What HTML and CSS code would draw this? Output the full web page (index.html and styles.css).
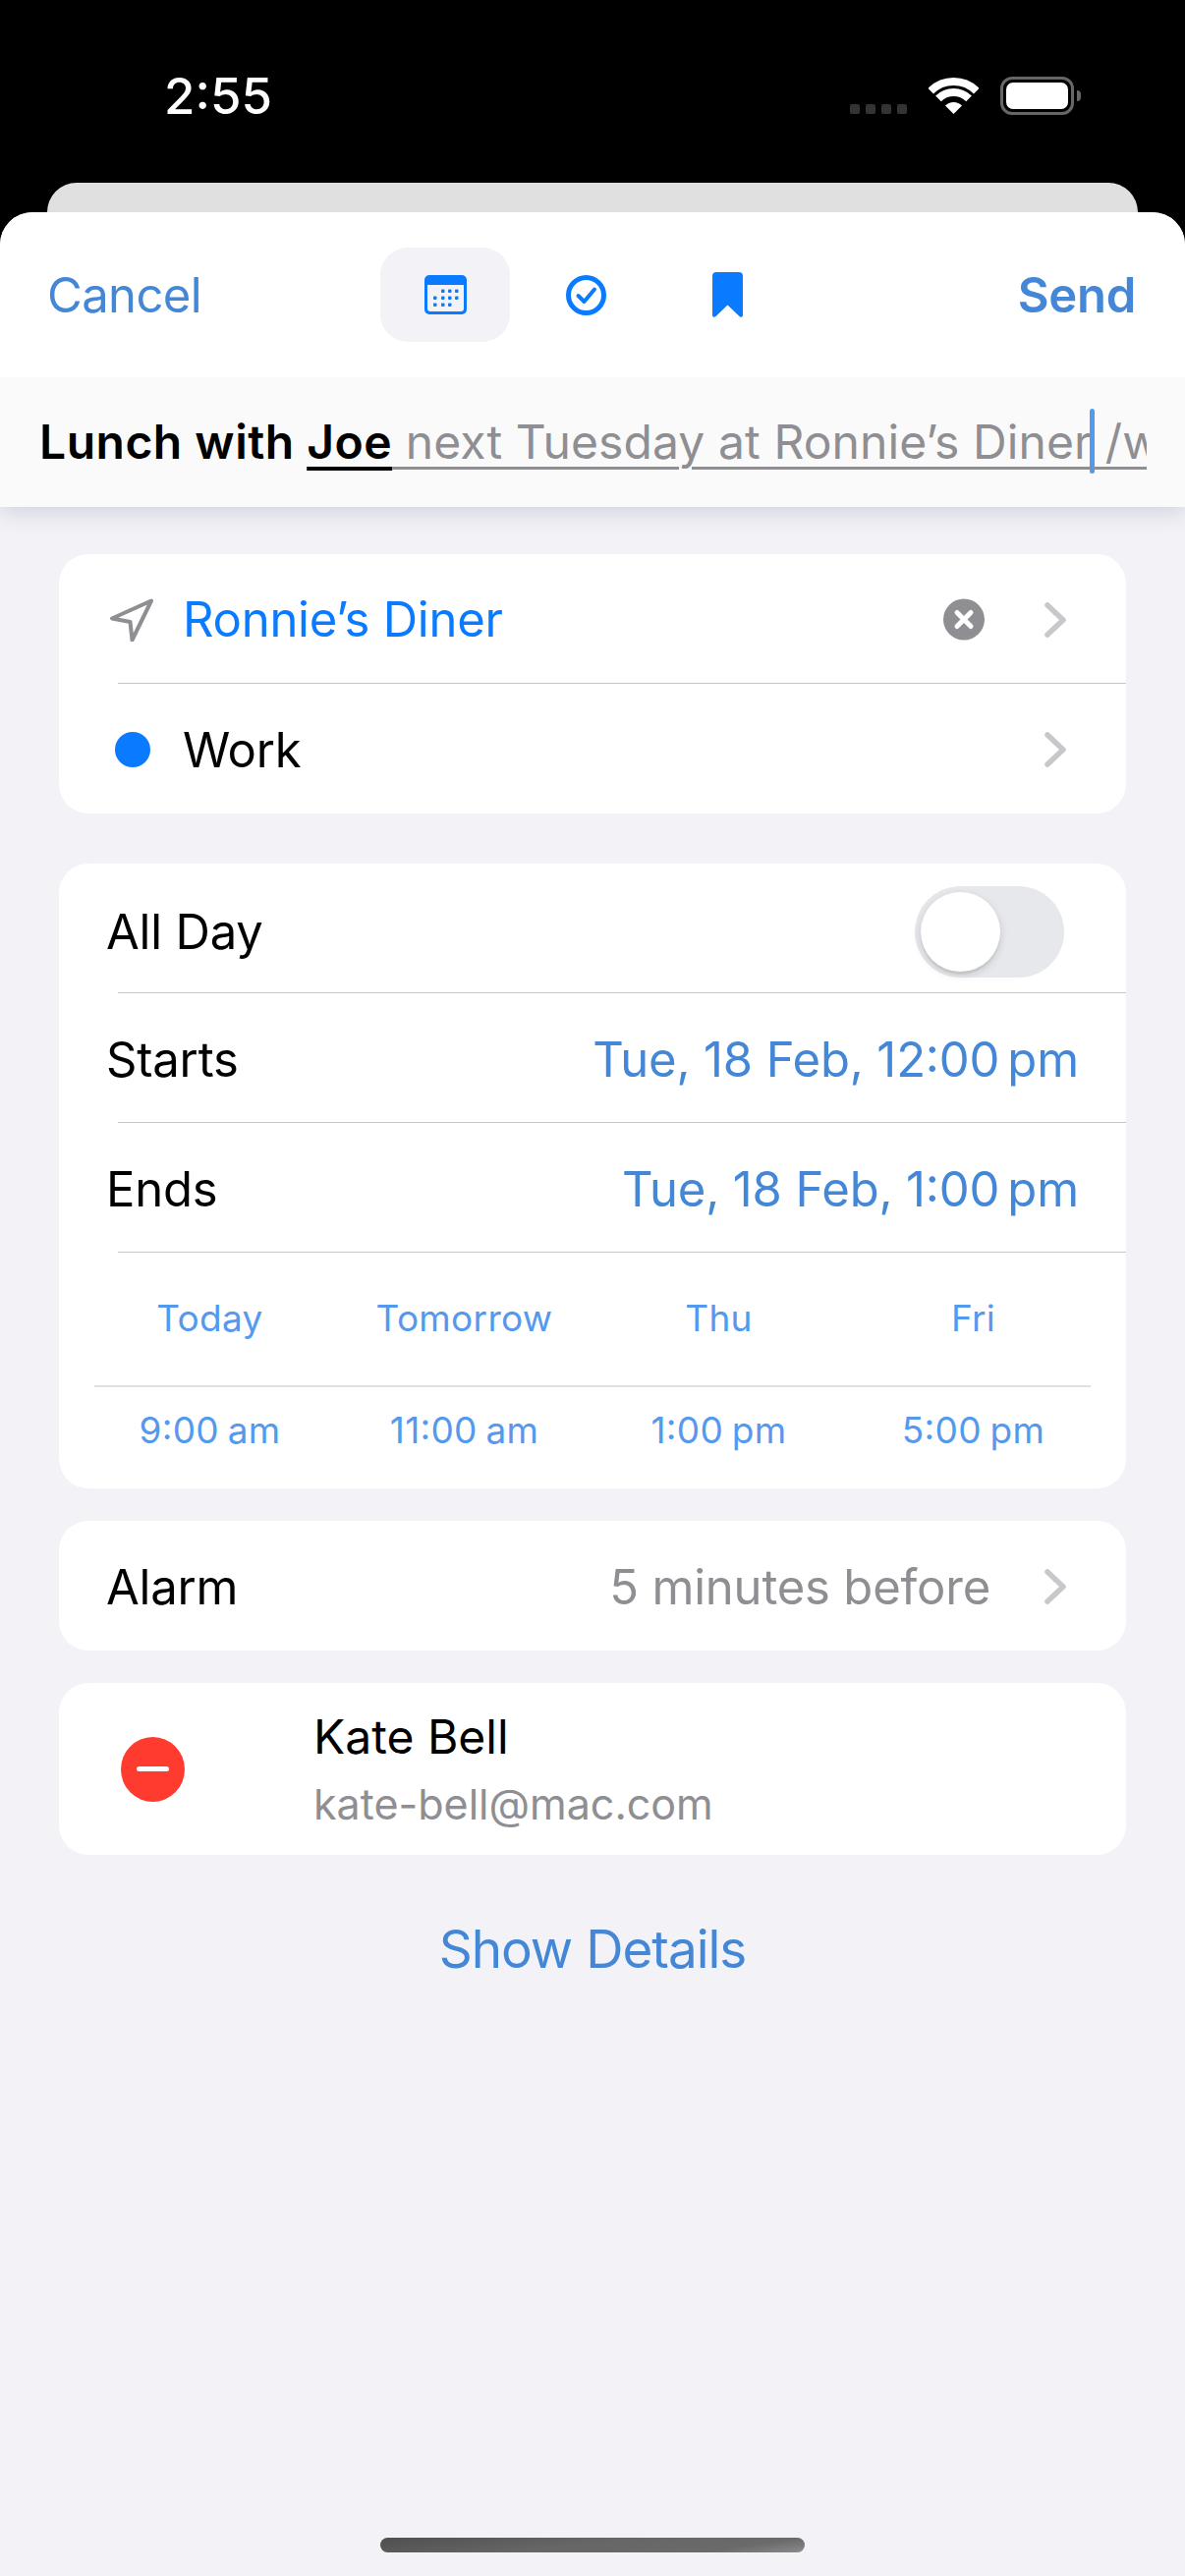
FILE: index.html
```html
<!DOCTYPE html>
<html lang="en">
<head>
<meta charset="utf-8">
<title>New Event</title>
<link rel="stylesheet" href="styles.css">
</head>
<body>
<header class="status">
  <span class="time">2:55</span>
  <div class="status-icons">
    <div class="signal"><i></i><i></i><i></i><i></i></div>
    <svg class="wifi" viewBox="0 0 51 37"><path class="wifi-arc" d="M2.2 13.7A33 33 0 0 1 48.8 13.7"/><path class="wifi-arc" d="M9.94 21.44A22 22 0 0 1 41.06 21.44"/><path class="wifi-dot" d="M25.5 37L17 28.5A12 12 0 0 1 34 28.5Z"/></svg>
    <div class="battery"><div class="battery-fill"></div></div>
    <div class="battery-nub"></div>
  </div>
</header>
<div class="back-sheet"></div>
<main class="sheet">
  <nav class="toolbar">
    <span class="cancel">Cancel</span>
    <div class="segments">
      <div class="segment is-active">
        <svg class="ic-cal" viewBox="0 0 43 40"><rect class="blue" width="43" height="40" rx="5"/><path class="panel" d="M3 10H40V34A3 3 0 0 1 37 37H6A3 3 0 0 1 3 34Z"/><g class="blue"><rect x="17" y="14.500" width="3.500" height="3.500" rx="1"/><rect x="24" y="14.500" width="3.500" height="3.500" rx="1"/><rect x="31" y="14.500" width="3.500" height="3.500" rx="1"/><rect x="9" y="21.500" width="3.500" height="3.500" rx="1"/><rect x="17" y="21.500" width="3.500" height="3.500" rx="1"/><rect x="24" y="21.500" width="3.500" height="3.500" rx="1"/><rect x="31" y="21.500" width="3.500" height="3.500" rx="1"/><rect x="9" y="28.500" width="3.500" height="3.500" rx="1"/><rect x="17" y="28.500" width="3.500" height="3.500" rx="1"/><rect x="24" y="28.500" width="3.500" height="3.500" rx="1"/></g></svg>
      </div>
      <div class="segment">
        <svg class="ic-check" viewBox="0 0 41 41"><circle class="stroke-blue" cx="20.500" cy="20.500" r="18"/><path class="stroke-blue thin" d="M12.500 21L18.500 27L29 14.500"/></svg>
      </div>
      <div class="segment">
        <svg class="ic-mark" viewBox="0 0 31 46"><path class="blue" d="M4 0H27A4 4 0 0 1 31 4V43.500C31 45.800 29 46.500 27.500 45L15.500 33.500L3.500 45C2 46.500 0 45.800 0 43.500V4A4 4 0 0 1 4 0Z"/></svg>
      </div>
    </div>
    <span class="send">Send</span>
  </nav>
  <div class="input-bar">
    <div class="input-text"><b class="typed">Lunch with <u class="tag">Joe</u></b><u class="hint"> next Tuesday at Ronnie’s Diner<i class="caret"></i> /work</u></div>
  </div>
  <section class="content">
    <div class="card">
      <div class="row">
        <svg class="ic-loc" viewBox="0 0 45 44"><path d="M43 2.500L3 20.500L21.500 24L23.500 42.500Z"/></svg>
        <span class="place">Ronnie’s Diner</span>
        <svg class="ic-clear" viewBox="0 0 42 43"><circle cx="21" cy="21.500" r="21"/><path d="M14 14.500L28 28.500M28 14.500L14 28.500"/></svg>
        <svg class="chev" viewBox="0 0 22 36"><path d="M3 3L19 18L3 33"/></svg>
      </div>
      <div class="sep"></div>
      <div class="row row-last">
        <span class="cal-dot"></span>
        <span class="place-black">Work</span>
        <svg class="chev chev-end" viewBox="0 0 22 36"><path d="M3 3L19 18L3 33"/></svg>
      </div>
    </div>
    <div class="card">
      <div class="row row-plain row-switch">
        <span class="label">All Day</span>
        <div class="switch"><div class="knob"></div></div>
      </div>
      <div class="sep"></div>
      <div class="row row-plain">
        <span class="label">Starts</span>
        <span class="date">Tue, 18 Feb, 12:00<span class="thin-gap"></span>pm</span>
      </div>
      <div class="sep"></div>
      <div class="row row-plain">
        <span class="label">Ends</span>
        <span class="date">Tue, 18 Feb, 1:00<span class="thin-gap"></span>pm</span>
      </div>
      <div class="sep"></div>
      <div class="quick quick-days">
        <span>Today</span><span>Tomorrow</span><span>Thu</span><span>Fri</span>
      </div>
      <div class="quick-sep"></div>
      <div class="quick quick-times">
        <span>9:00 am</span><span>11:00 am</span><span>1:00 pm</span><span>5:00 pm</span>
      </div>
    </div>
    <div class="card card-alarm">
      <div class="row row-alarm">
        <span class="label">Alarm</span>
        <span class="muted">5 minutes before</span>
        <svg class="chev" viewBox="0 0 22 36"><path d="M3 3L19 18L3 33"/></svg>
      </div>
    </div>
    <div class="card card-person">
      <div class="person">
        <div class="remove"><div class="remove-bar"></div></div>
        <div class="person-text">
          <span class="person-name">Kate Bell</span>
          <span class="person-mail">kate-bell@mac.com</span>
        </div>
      </div>
    </div>
    <div class="details">Show Details</div>
  </section>
  <div class="home-indicator"></div>
</main>
</body>
</html>
```
FILE: styles.css
```css
* { box-sizing: border-box; }
html, body { margin: 0; padding: 0; }
body {
  width: 1206px;
  height: 2622px;
  background: #000;
  font-family: Inter, "Noto Sans", sans-serif;
  display: flex;
  flex-direction: column;
  overflow: hidden;
}
.status {
  height: 186px;
  flex: none;
  padding: 78px 106px 0 167px;
  display: flex;
  justify-content: space-between;
  align-items: flex-start;
}
.time { color: #fff; font-size: 51px; line-height: 39px; font-weight: 500; font-feature-settings: "case"; }
.status-icons { display: flex; align-items: flex-start; height: 39px; }
.signal { display: flex; gap: 6px; margin-top: 28px; margin-right: 22px; }
.signal i { width: 10px; height: 10px; border-radius: 2px; background: #333; }
.wifi { width: 51px; height: 37px; margin-top: 1px; margin-right: 22px; }
.wifi-arc { fill: none; stroke: #fff; stroke-width: 8; }
.wifi-dot { fill: #fff; }
.battery { width: 75px; height: 39px; border: 3px solid #666; border-radius: 12px; padding: 3px; }
.battery-fill { height: 100%; background: #fff; border-radius: 7px; }
.battery-nub { width: 4px; height: 11px; margin: 14px 0 0 3px; background: #666; border-radius: 0 4px 4px 0; }

.back-sheet { height: 30px; flex: none; margin: 0 48px; background: #e0e0e0; border-radius: 30px 30px 0 0; }
.sheet {
  flex: 1;
  display: flex;
  flex-direction: column;
  background: #f2f2f7;
  border-radius: 33px 33px 0 0;
  overflow: hidden;
}

.toolbar {
  height: 168px;
  flex: none;
  background: #fff;
  padding: 0 50px 0 48px;
  display: flex;
  align-items: center;
  position: relative;
  z-index: 2;
}
.cancel { width: 339px; flex: none; font-size: 49px; color: #4487d6; letter-spacing: -0.6px; }
.send { margin-left: auto; font-size: 49px; font-weight: 600; color: #4487d6; letter-spacing: -0.3px; }
.segments { display: flex; gap: 11.5px; }
.segment { width: 132px; height: 96px; border-radius: 28px; display: flex; align-items: center; justify-content: center; }
.segment.is-active { background: #f2f2f7; }
.ic-cal { width: 43px; height: 40px; }
.ic-check { width: 41px; height: 41px; }
.ic-mark { width: 31px; height: 46px; }
.blue { fill: #0a7aff; }
.panel { fill: #f2f2f7; }
.stroke-blue { fill: none; stroke: #0a7aff; stroke-width: 5; }
.stroke-blue.thin { stroke-width: 4; stroke-linecap: round; stroke-linejoin: round; }

.input-bar {
  height: 132px;
  flex: none;
  background: #fafafa;
  padding: 0 39px 0 40px;
  display: flex;
  align-items: center;
  box-shadow: 0 4px 22px rgba(60, 70, 100, 0.2);
  position: relative;
  z-index: 1;
}
.input-text {
  width: 100%;
  overflow: hidden;
  white-space: pre;
  font-size: 48px;
  line-height: 72px;
}
.typed { color: #000; font-weight: 600; letter-spacing: 0.5px; }
.input-text u { text-underline-offset: 8px; }
.tag { text-decoration-color: #000; text-decoration-thickness: 4px; }
.hint { color: #8e8e93; letter-spacing: 0.1px; text-decoration-color: #8e8e93; text-decoration-thickness: 3px; }
.caret {
  display: inline-block;
  width: 5px;
  height: 66px;
  margin: 0 -2.500px;
  vertical-align: -15px;
  background: #5599ee;
  border-radius: 3px;
}

.content { flex: 1; padding: 48px 60px 0; display: flex; flex-direction: column; gap: 51px; }
.card { background: #fff; border-radius: 30px; }
.card-alarm, .card-person { margin-top: -18px; }
.row { height: 131px; display: flex; align-items: center; padding: 2px 61px 0 51px; }
.row-last { height: 132px; }
.row-plain { padding: 4px 48px 0 48px; justify-content: space-between; }
.row-switch { padding-top: 7px; }
.row-alarm { height: 132px; padding: 2px 61px 0 48px; }
.sep { height: 1px; margin-left: 60px; background: #c6c6c8; }
.ic-loc { width: 45px; height: 44px; flex: none; }
.ic-loc path { fill: none; stroke: #8e8e93; stroke-width: 4; stroke-linejoin: round; }
.place, .place-black { margin-left: 30px; font-size: 49px; letter-spacing: -0.25px; }
.place { color: #0a7aff; flex: 1; }
.place-black { color: #000; flex: 1; }
.ic-clear { width: 42px; height: 43px; flex: none; margin-right: 61px; }
.ic-clear circle { fill: #8e8e93; }
.ic-clear path { stroke: #fff; stroke-width: 5; stroke-linecap: round; fill: none; }
.chev { width: 22px; height: 36px; flex: none; }
.chev path { fill: none; stroke: #c7c7cc; stroke-width: 5.500; stroke-linecap: round; stroke-linejoin: round; }
.cal-dot { width: 36px; height: 36px; flex: none; margin: 0 3px 0 6px; border-radius: 50%; background: #0a7aff; }
.label { font-size: 49px; color: #000; letter-spacing: -0.2px; }
.switch { width: 152px; height: 93px; margin-right: 15px; background: #e7e8eb; border-radius: 47px; padding: 6px; }
.knob { width: 81px; height: 81px; background: #fff; border-radius: 50%; box-shadow: 0 3px 8px rgba(0, 0, 0, 0.15), 0 3px 1px rgba(0, 0, 0, 0.06); }
.date { font-size: 49px; color: #4487d6; letter-spacing: -0.15px; font-feature-settings: "case"; }
.thin-gap { display: inline-block; width: 8px; }

.quick { display: grid; grid-template-columns: repeat(4, 259px); padding: 0 24px; font-size: 37px; color: #5599ee; text-align: center; }
.quick-days { height: 136px; align-items: center; padding-bottom: 4px; letter-spacing: 0.3px; }
.quick-times { height: 103px; align-items: center; padding-bottom: 16px; word-spacing: -2px; letter-spacing: 0.3px; font-feature-settings: "case"; }
.quick-sep { height: 2px; margin: -1px 36px 0; background: #e0e0e2; }

.person { height: 175px; display: flex; align-items: center; padding-left: 63px; }
.remove { width: 65px; height: 66px; flex: none; border-radius: 50%; background: #ff3b30; display: flex; align-items: center; justify-content: center; }
.remove-bar { width: 33px; height: 5px; border-radius: 3px; background: #fff; }
.person-text { margin-left: 131px; padding-top: 2px; display: flex; flex-direction: column; }
.person-name { font-size: 48px; line-height: 60px; color: #000; }
.person-mail { font-size: 43px; line-height: 60px; margin-top: 8px; color: #8e8e93; }
.muted { margin-left: auto; margin-right: 55px; font-size: 49px; color: #8e8e93; letter-spacing: -0.2px; }
.details { margin-top: 15px; text-align: center; font-size: 53px; line-height: 60px; color: #4487d6; letter-spacing: -1px; }

.home-indicator {
  width: 432px;
  height: 15px;
  flex: none;
  margin: 0 auto 24px;
  border-radius: 8px;
  background: linear-gradient(172deg, #4f4f4f 0%, #666 45%, #6a6a6a 80%, #8b8b8f 100%);
}
```
